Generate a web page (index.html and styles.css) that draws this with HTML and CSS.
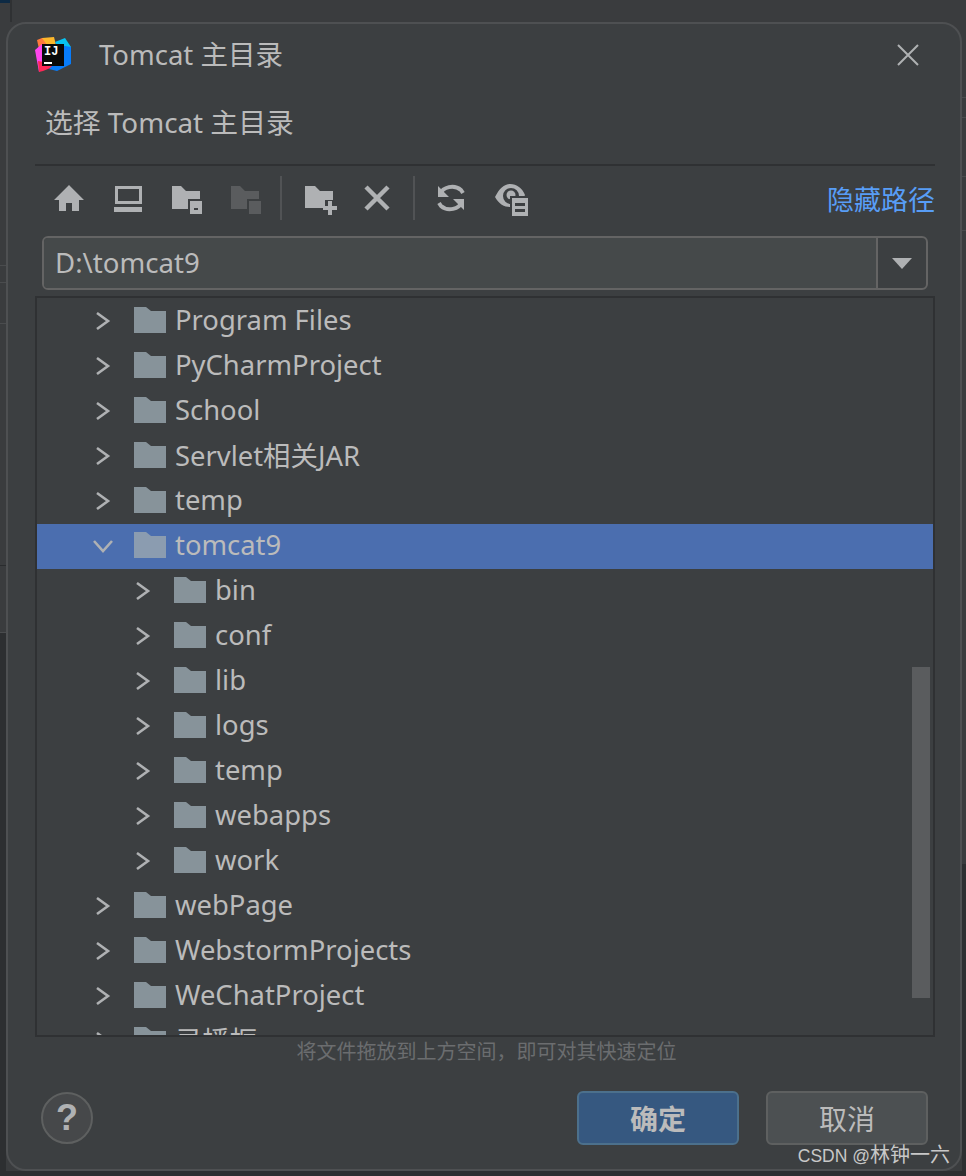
FILE: index.html
```html
<!DOCTYPE html>
<html lang="zh-CN">
<head>
<meta charset="utf-8">
<title>Tomcat 主目录</title>
<link rel="stylesheet" href="styles.css">
</head>
<body>
<div class="dialog">
  <header class="titlebar">
    <svg class="logo" viewBox="0 0 36 36" width="36" height="36">
      <polygon points="7,1 19,0 21,8 6,12" fill="#fcb72b"/>
      <polygon points="2,3 7,1 12,8 4,12" fill="#ff7a3c"/>
      <polygon points="0,13 7,7 11,28 4,35 2,24" fill="#ff45ed"/>
      <polygon points="4,35 3,24 14,26 18,30 8,34" fill="#fe2857"/>
      <polygon points="20,5 30,1 36,10 35,20 24,12" fill="#07c3f2"/>
      <polygon points="24,8 36,10 36,27 22,34 14,32 26,20" fill="#087cfa"/>
      <rect x="7" y="7" width="22" height="22" fill="#0a0a0a"/>
      <text x="9" y="18" class="logo-text">IJ</text>
      <rect x="9" y="25" width="8" height="2" fill="#fff"/>
    </svg>
    <h1 class="title">Tomcat 主目录</h1>
    <svg class="close" viewBox="0 0 22 22" width="22" height="22"><path d="M1 1 21 21M21 1 1 21"/></svg>
  </header>
  <div class="subtitle">选择 Tomcat 主目录</div>
  <div class="rule"></div>
  <div class="toolbar">
    <div class="group group-a">
      <svg class="tool" viewBox="0 0 36 36"><path d="M18 5 33 20H28V31H21V23H15V31H8V20H3Z"/></svg>
      <svg class="tool" viewBox="0 0 36 36"><path fill-rule="evenodd" d="M5 6H32V24H5ZM8 9V21H29V9ZM4 27H32V32H4Z"/></svg>
      <svg class="tool" viewBox="0 0 36 36"><path d="M3 6H12L17 11H31V19H19V29H3Z"/><path fill-rule="evenodd" d="M21 21H33V34H21ZM25 28V30H29V28Z"/></svg>
      <svg class="tool dim" viewBox="0 0 36 36"><path d="M3 6H12L17 11H31V19H19V29H3Z"/><rect x="21" y="21" width="12" height="13"/></svg>
    </div>
    <div class="sep sep-first"></div>
    <div class="group group-b">
      <svg class="tool" viewBox="0 0 36 36"><path d="M3 6H13L18 11H31V20H23V28H3Z"/><path d="M26 21H30V26H35V30H30V35H26V30H21V26H26Z"/></svg>
      <svg class="tool" viewBox="0 0 36 36"><path class="cross" d="M7 7 29 29M29 7 7 29"/></svg>
    </div>
    <div class="sep"></div>
    <div class="group group-c">
      <svg class="tool" viewBox="0 0 36 36"><path class="arc" d="M7 14C10 7 21 4 28 10L30 13M29 22C26 29 15 32 8 26L6 23"/><path d="M5 6V17H16ZM31 30V19H20Z"/></svg>
      <svg class="tool" viewBox="0 0 36 36"><path fill-rule="evenodd" d="M1 17C5 9 10 4 16 4C23 4 28 8 31 15C28 22 23 27 16 27C10 27 5 24 1 17ZM17 8A8 8 0 1 0 17 24A8 8 0 1 0 17 8Z"/><circle cx="17" cy="15" r="4.5"/><rect class="gap" x="16" y="16" width="20" height="20"/><path fill-rule="evenodd" d="M18 18H34V36H18ZM21 23V26H31V23ZM21 29V32H31V29Z"/></svg>
    </div>
    <a class="toggle">隐藏路径</a>
  </div>
  <div class="path">
    <div class="path-value">D:\tomcat9</div>
    <div class="path-drop"><span class="triangle"></span></div>
  </div>
  <div class="tree">
    <div class="row"><svg class="chev" viewBox="0 0 24 24"><path d="M6 4 17 12 6 20"/></svg><svg class="folder" viewBox="0 0 32 26"><path d="M0 0H12L17 4H32V26H0Z"/></svg><span>Program Files</span></div>
    <div class="row"><svg class="chev" viewBox="0 0 24 24"><path d="M6 4 17 12 6 20"/></svg><svg class="folder" viewBox="0 0 32 26"><path d="M0 0H12L17 4H32V26H0Z"/></svg><span>PyCharmProject</span></div>
    <div class="row"><svg class="chev" viewBox="0 0 24 24"><path d="M6 4 17 12 6 20"/></svg><svg class="folder" viewBox="0 0 32 26"><path d="M0 0H12L17 4H32V26H0Z"/></svg><span>School</span></div>
    <div class="row"><svg class="chev" viewBox="0 0 24 24"><path d="M6 4 17 12 6 20"/></svg><svg class="folder" viewBox="0 0 32 26"><path d="M0 0H12L17 4H32V26H0Z"/></svg><span>Servlet相关JAR</span></div>
    <div class="row"><svg class="chev" viewBox="0 0 24 24"><path d="M6 4 17 12 6 20"/></svg><svg class="folder" viewBox="0 0 32 26"><path d="M0 0H12L17 4H32V26H0Z"/></svg><span>temp</span></div>
    <div class="row selected"><svg class="chev" viewBox="0 0 24 24"><path d="M3 7 12 17 21 7"/></svg><svg class="folder" viewBox="0 0 32 26"><path d="M0 0H12L17 4H32V26H0Z"/></svg><span>tomcat9</span></div>
    <div class="row sub"><svg class="chev" viewBox="0 0 24 24"><path d="M6 4 17 12 6 20"/></svg><svg class="folder" viewBox="0 0 32 26"><path d="M0 0H12L17 4H32V26H0Z"/></svg><span>bin</span></div>
    <div class="row sub"><svg class="chev" viewBox="0 0 24 24"><path d="M6 4 17 12 6 20"/></svg><svg class="folder" viewBox="0 0 32 26"><path d="M0 0H12L17 4H32V26H0Z"/></svg><span>conf</span></div>
    <div class="row sub"><svg class="chev" viewBox="0 0 24 24"><path d="M6 4 17 12 6 20"/></svg><svg class="folder" viewBox="0 0 32 26"><path d="M0 0H12L17 4H32V26H0Z"/></svg><span>lib</span></div>
    <div class="row sub"><svg class="chev" viewBox="0 0 24 24"><path d="M6 4 17 12 6 20"/></svg><svg class="folder" viewBox="0 0 32 26"><path d="M0 0H12L17 4H32V26H0Z"/></svg><span>logs</span></div>
    <div class="row sub"><svg class="chev" viewBox="0 0 24 24"><path d="M6 4 17 12 6 20"/></svg><svg class="folder" viewBox="0 0 32 26"><path d="M0 0H12L17 4H32V26H0Z"/></svg><span>temp</span></div>
    <div class="row sub"><svg class="chev" viewBox="0 0 24 24"><path d="M6 4 17 12 6 20"/></svg><svg class="folder" viewBox="0 0 32 26"><path d="M0 0H12L17 4H32V26H0Z"/></svg><span>webapps</span></div>
    <div class="row sub"><svg class="chev" viewBox="0 0 24 24"><path d="M6 4 17 12 6 20"/></svg><svg class="folder" viewBox="0 0 32 26"><path d="M0 0H12L17 4H32V26H0Z"/></svg><span>work</span></div>
    <div class="row"><svg class="chev" viewBox="0 0 24 24"><path d="M6 4 17 12 6 20"/></svg><svg class="folder" viewBox="0 0 32 26"><path d="M0 0H12L17 4H32V26H0Z"/></svg><span>webPage</span></div>
    <div class="row"><svg class="chev" viewBox="0 0 24 24"><path d="M6 4 17 12 6 20"/></svg><svg class="folder" viewBox="0 0 32 26"><path d="M0 0H12L17 4H32V26H0Z"/></svg><span>WebstormProjects</span></div>
    <div class="row"><svg class="chev" viewBox="0 0 24 24"><path d="M6 4 17 12 6 20"/></svg><svg class="folder" viewBox="0 0 32 26"><path d="M0 0H12L17 4H32V26H0Z"/></svg><span>WeChatProject</span></div>
    <div class="row"><svg class="chev" viewBox="0 0 24 24"><path d="M6 4 17 12 6 20"/></svg><svg class="folder" viewBox="0 0 32 26"><path d="M0 0H12L17 4H32V26H0Z"/></svg><span>录播框</span></div>
    <div class="thumb"></div>
  </div>
  <div class="hint">将文件拖放到上方空间，即可对其快速定位</div>
  <footer class="footer">
    <button class="help">?</button>
    <button class="btn primary">确定</button>
    <button class="btn">取消</button>
  </footer>
</div>
<div class="watermark"><span class="mark-latin">CSDN @</span>林钟一六</div>
</body>
</html>
```
FILE: styles.css
```css
* { box-sizing: border-box; }
html, body { margin: 0; height: 1176px; overflow: hidden; }
body {
  position: relative;
  padding: 22px 4px 5px 6px;
  font-family: "Noto Sans", "Noto Sans CJK SC", sans-serif;
  color: #bbbbbb;
  background:
    linear-gradient(#0d2a44, #0d2a44) 0 0 / 10px 3px no-repeat,
    linear-gradient(#2f3133, #2f3133) 10px 0 / 2px 22px no-repeat,
    linear-gradient(#4a4c4e, #4a4c4e) 0 265px / 6px 1px no-repeat,
    linear-gradient(#4a4c4e, #4a4c4e) 0 282px / 6px 1px no-repeat,
    linear-gradient(#4a4c4e, #4a4c4e) 0 323px / 6px 1px no-repeat,
    linear-gradient(#2a2c2e, #2a2c2e) 0 565px / 6px 1px no-repeat,
    linear-gradient(#4a4c4e, #4a4c4e) 0 632px / 6px 1px no-repeat,
    linear-gradient(#4a4c4e, #4a4c4e) 962px 97px / 4px 1px no-repeat,
    linear-gradient(#4a4c4e, #4a4c4e) 962px 117px / 4px 1px no-repeat,
    linear-gradient(#4a4c4e, #4a4c4e) 962px 176px / 4px 1px no-repeat,
    linear-gradient(#4a4c4e, #4a4c4e) 962px 230px / 4px 1px no-repeat,
    linear-gradient(#2d2f31, #2d2f31) 0 633px / 6px 543px no-repeat,
    linear-gradient(#2d2f31, #2d2f31) 962px 864px / 4px 312px no-repeat,
    linear-gradient(#2d2f31, #2d2f31) 0 1171px / 966px 5px no-repeat,
    #3a3c3e;
}

.dialog {
  height: 1149px;
  display: flex;
  flex-direction: column;
  background: #3c3f41;
  border: 2px solid #4e5052;
  border-radius: 20px;
}

.titlebar {
  height: 62px;
  flex: none;
  display: flex;
  align-items: center;
  padding: 0 41px 0 27px;
}
.logo { flex: none; margin-top: -1px; }
.logo-text { font: 700 12px "Liberation Mono", monospace; fill: #fff; }
.title { margin: 0 0 0 28px; font-size: 27.5px; font-weight: 400; line-height: 38px; flex: 1; }
.close { flex: none; fill: none; stroke: #afb1b3; stroke-width: 2; }

.subtitle {
  height: 78px;
  flex: none;
  padding: 17px 0 0 37px;
  font-size: 27.8px;
  line-height: 38px;
}

.rule { height: 2px; flex: none; margin: 0 25px 0 27px; background: #2f3133; }

.toolbar {
  height: 70px;
  flex: none;
  display: flex;
  align-items: center;
  padding: 0 25px 6px 43px;
}
.group { display: flex; align-items: center; }
.group-a { gap: 23px; }
.group-b { gap: 21px; }
.group-c { gap: 25px; }
.tool { width: 36px; height: 36px; flex: none; fill: #afb1b3; overflow: visible; }
.tool.dim { fill: #5a5c5e; }
.tool .cross { fill: none; stroke: #afb1b3; stroke-width: 4.5; }
.tool .arc { fill: none; stroke: #afb1b3; stroke-width: 4; }
.tool .gap { fill: #3c3f41; }
.sep { width: 2px; height: 44px; flex: none; margin: 0 18px; background: #515355; }
.sep-first { margin: 0 20px 0 16px; }
.toggle { margin-left: auto; margin-top: 4px; font-size: 27px; line-height: 36px; color: #589df6; }

.path {
  height: 54px;
  flex: none;
  margin: 0 32px 0 34px;
  display: flex;
  border: 2px solid #646464;
  border-radius: 6px;
  overflow: hidden;
}
.path-value { flex: 1; padding-left: 11px; font-size: 27.6px; line-height: 48px; background: #45494a; }
.path-drop {
  width: 50px;
  flex: none;
  border-left: 2px solid #646464;
  display: flex;
  align-items: center;
  justify-content: center;
}
.triangle { width: 0; height: 0; border-style: solid; border-width: 11px 10px 0; border-color: #afb1b3 transparent transparent; }

.tree {
  position: relative;
  height: 741px;
  flex: none;
  margin: 6px 25px 0 27px;
  padding-top: 1px;
  border: 2px solid #2f3133;
  overflow: hidden;
}
.row {
  height: 45px;
  display: flex;
  align-items: center;
  padding-left: 54px;
  font-size: 27.4px;
  white-space: nowrap;
}
.row span { margin-bottom: 5px; margin-left: -1px; }
.row.sub { padding-left: 94px; }
.row.selected { background: #4b6eaf; }
.chev { width: 24px; height: 24px; flex: none; margin: 0 19px 2px 0; fill: none; stroke: #afb1b3; stroke-width: 2.6; }
.folder { width: 32px; height: 26px; flex: none; margin: 0 10px 3px 0; fill: #87939a; }
.row.selected .folder { fill: #8b9cb0; }
.thumb { position: absolute; top: 369px; right: 3px; width: 18px; height: 331px; background: #5a5c5e; }

.hint {
  height: 30px;
  flex: none;
  text-align: center;
  font-size: 20px;
  line-height: 30px;
  color: #6b6d6f;
  padding-left: 5px;
}

.footer {
  flex: none;
  margin-top: 24px;
  display: flex;
  align-items: center;
  gap: 27px;
  padding: 0 32px 0 33px;
}
.help {
  width: 52px;
  height: 52px;
  margin-right: auto;
  padding: 0;
  border: 2px solid #5e6060;
  border-radius: 50%;
  background: #46484a;
  color: #afb1b3;
  font: 700 36px/1 "Liberation Sans", sans-serif;
}
.btn {
  width: 162px;
  height: 54px;
  padding: 0;
  border: 2px solid #5e6060;
  border-radius: 6px;
  background: #4c5052;
  color: #bbbbbb;
  font: 400 28px/1 "Noto Sans CJK SC", sans-serif;
}
.btn.primary { border-color: #4c708c; background: #365880; font-weight: 700; }

.watermark {
  position: absolute;
  right: 16px;
  bottom: 6px;
  font: 400 20px/28px "Noto Sans CJK SC", sans-serif;
  color: #c8c8c8;
}
.mark-latin { font: 400 17.5px/28px "Liberation Sans", sans-serif; }
```
